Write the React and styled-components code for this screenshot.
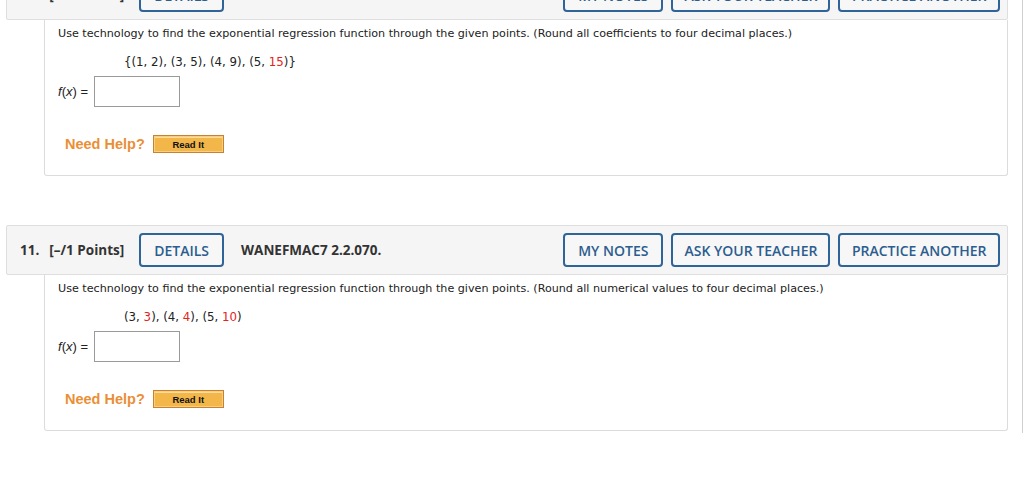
import styled, { createGlobalStyle } from "styled-components";

const Global = createGlobalStyle`
  body {
    margin: 0;
    background: #fff;
    font-family: "DejaVu Sans", Verdana, sans-serif;
    color: #222;
  }
`;

const Page = styled.div`
  display: flex;
  width: 1024px;
  height: 478px;
  overflow: hidden;
`;

const Main = styled.div`
  flex: 1;
  padding-left: 6px;
  padding-right: 14px;
`;

const Rail = styled.div`
  width: 1px;
  height: 433px;
  background: #cfcfcf;
  margin-right: 1px;
`;

const Question = styled.div`
  margin-top: ${(p) => p.$top}px;
`;

const Header = styled.div`
  height: 48px;
  display: flex;
  align-items: center;
  gap: 8px;
  padding: 0 7px 0 13px;
  background: #f5f5f5;
  border: 1px solid #dedede;
  border-radius: 2px;
  font-family: "Open Sans", sans-serif;
  font-size: 13.5px;
  color: #333;
`;

const Num = styled.span`
  font-weight: 700;
  margin-right: 2px;
`;

const Points = styled.span`
  font-weight: 700;
  margin-right: 7px;
`;

const Code = styled.span`
  font-weight: 700;
  margin-left: 9px;
  flex: 1;
`;

const HeadButton = styled.div`
  height: 34px;
  box-sizing: border-box;
  padding: 0 ${(p) => p.$pad}px;
  display: flex;
  align-items: center;
  border: 2px solid #2f6498;
  border-radius: 4px;
  background: #f7f7f7;
  color: #2c5d8f;
  font-weight: 600;
  font-size: 14px;
`;

const Body = styled.div`
  margin-left: 38px;
  height: 156px;
  box-sizing: border-box;
  border: 1px solid #dcdcdc;
  border-top: none;
  border-radius: 0 0 3px 3px;
  padding: 6px 0 0 13px;
`;

const Prompt = styled.div`
  font-size: 11.15px;
  line-height: 16px;
`;

const PointList = styled.div`
  margin: 12px 0 0 66px;
  font-size: 11.8px;
  line-height: 16px;
`;

const Red = styled.span`
  color: #e3231d;
`;

const AnswerRow = styled.div`
  display: flex;
  align-items: center;
  gap: 6px;
  margin-top: 6px;
  font-family: "Liberation Sans", Arial, sans-serif;
  font-size: 13px;
`;

const Fx = styled.span`
  i {
    font-style: italic;
  }
`;

const AnswerBox = styled.div`
  width: 86px;
  height: 31px;
  box-sizing: border-box;
  border: 1px solid #9a9a9a;
  background: #fff;
`;

const HelpRow = styled.div`
  display: flex;
  align-items: center;
  gap: 8px;
  margin: 28px 0 0 7px;
`;

const NeedHelp = styled.span`
  font-family: "Liberation Sans", Arial, sans-serif;
  font-weight: 700;
  font-size: 14.5px;
  color: #ea8f36;
`;

const ReadIt = styled.div`
  width: 71px;
  height: 18px;
  box-sizing: border-box;
  border: 1px solid #c9802f;
  background: #f2b649;
  box-shadow: inset 0 0 0 1px #f8cf80, inset 0 1px 0 1px #fbdc9e;
  display: flex;
  align-items: center;
  justify-content: center;
  font-family: "Liberation Sans", Arial, sans-serif;
  font-weight: 700;
  font-size: 9.5px;
  color: #111;
`;

const questions = [
  {
    num: "10.",
    code: "WANEFMAC7 2.2.068.",
    top: -30,
    round: "coefficients",
    points: (
      <>
        {"{(1, 2), (3, 5), (4, 9), (5, "}
        <Red>15</Red>
        {")}"}
      </>
    ),
  },
  {
    num: "11.",
    code: "WANEFMAC7 2.2.070.",
    top: 49,
    round: "numerical values",
    points: (
      <>
        (3, <Red>3</Red>), (4, <Red>4</Red>), (5, <Red>10</Red>)
      </>
    ),
  },
];

const QuestionBlock = ({ q }) => (
  <Question $top={q.top}>
    <Header>
      <Num>{q.num}</Num>
      <Points>[–/1 Points]</Points>
      <HeadButton $pad={13}>DETAILS</HeadButton>
      <Code>{q.code}</Code>
      <HeadButton $pad={13}>MY NOTES</HeadButton>
      <HeadButton $pad={11}>ASK YOUR TEACHER</HeadButton>
      <HeadButton $pad={11.5}>PRACTICE ANOTHER</HeadButton>
    </Header>
    <Body>
      <Prompt>
        Use technology to find the exponential regression function through the
        given points. (Round all {q.round} to four decimal places.)
      </Prompt>
      <PointList>{q.points}</PointList>
      <AnswerRow>
        <Fx>
          <i>f</i>(<i>x</i>) =
        </Fx>
        <AnswerBox />
      </AnswerRow>
      <HelpRow>
        <NeedHelp>Need Help?</NeedHelp>
        <ReadIt>Read It</ReadIt>
      </HelpRow>
    </Body>
  </Question>
);

export default function App() {
  return (
    <>
      <Global />
      <Page>
        <Main>
          {questions.map((q) => (
            <QuestionBlock key={q.num} q={q} />
          ))}
        </Main>
        <Rail />
      </Page>
    </>
  );
}
